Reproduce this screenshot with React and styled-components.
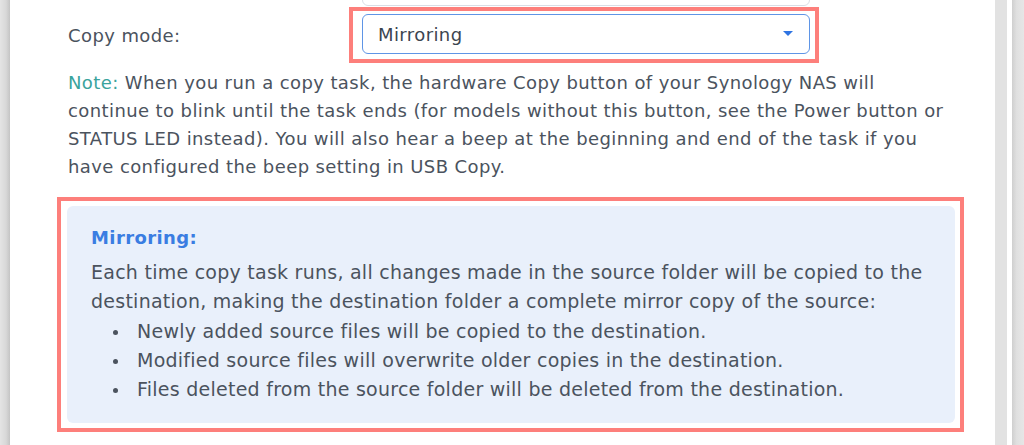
import React from "react";
import styled, { createGlobalStyle } from "styled-components";

const Global = createGlobalStyle`
  html, body { margin: 0; padding: 0; background: #ffffff; }
  body { font-family: "DejaVu Sans", Verdana, sans-serif; }
  * { box-sizing: border-box; }
`;

const Frame = styled.div`
  display: flex;
  width: 1024px;
  height: 445px;
  overflow: hidden;
  background: #ffffff;
`;

const LeftShade = styled.div`
  width: 10px;
  flex: none;
  background: linear-gradient(to right, #e4e4e4 0%, #d8d8d8 60%, #c4c4c4 100%);
`;

const Dialog = styled.div`
  flex: 1;
  padding-left: 58px;
  display: flex;
  flex-direction: column;
  color: #4b535e;
  font-size: 18px;
  line-height: 28px;
  letter-spacing: 0.4px;
`;

const RightEdge = styled.div`
  flex: none;
  display: flex;
  width: 29px;
`;

const Strip = styled.div`
  width: ${(p) => p.$w}px;
  background: ${(p) => p.$bg};
`;

const PrevRow = styled.div`
  height: 6px;
  overflow: hidden;
  display: flex;
  align-items: flex-end;
  padding-left: 294px;
`;

const PrevInput = styled.div`
  flex: none;
  width: 448px;
  height: 40px;
  border: 1px solid #d9dee5;
  border-radius: 6px;
`;

const FieldRow = styled.div`
  display: flex;
  align-items: center;
  margin-top: 1px;
`;

const Label = styled.div`
  width: 281px;
  flex: none;
  padding-top: 2px;
`;

const Highlight = styled.div`
  border: 4px solid #fd7f7b;
  padding: ${(p) => p.$pad};
  flex: none;
`;

const Select = styled.div`
  width: 448px;
  height: 40px;
  border: 1px solid #5f95e6;
  border-radius: 6px;
  display: flex;
  align-items: center;
  justify-content: space-between;
  padding: 1px 16px 0 15px;
  color: #3c4550;
`;

const Caret = styled.span`
  width: 0;
  height: 0;
  border-left: 5.5px solid transparent;
  border-right: 5.5px solid transparent;
  border-top: 5px solid #2f74e2;
  margin-top: -2px;
`;

const Note = styled.p`
  margin: 6px 0 0;
  width: 927px;
`;

const NoteTag = styled.span`
  color: #3aa39c;
`;

const InfoWrap = styled.div`
  margin-top: 16px;
  margin-left: -11px;
  width: 907px;
`;

const InfoBox = styled.div`
  background: #e9f0fb;
  border-radius: 6px;
  padding: 18px 20px 19px 24px;
`;

const Title = styled.div`
  color: #3a7de2;
  font-weight: bold;
  margin-bottom: 6px;
`;

const Body = styled.div`
  font-size: 19px;
  letter-spacing: 0.25px;
  line-height: 29px;
`;

const List = styled.ul`
  margin: 1px 0 0;
  padding-left: 22px;
  list-style: none;
`;

const Item = styled.li`
  display: flex;
  align-items: center;
  &::before {
    content: "";
    flex: none;
    width: 5px;
    height: 5px;
    border-radius: 50%;
    background: #4b535e;
    margin: 2px 19px 0 0;
  }
`;

export default function App() {
  return (
    <>
      <Global />
      <Frame>
        <LeftShade />
        <Dialog>
          <PrevRow>
            <PrevInput />
          </PrevRow>
          <FieldRow>
            <Label>Copy mode:</Label>
            <Highlight $pad="3px 5px 5px 9px">
              <Select>
                <span>Mirroring</span>
                <Caret />
              </Select>
            </Highlight>
          </FieldRow>
          <Note>
            <NoteTag>Note:</NoteTag> When you run a copy task, the hardware Copy
            button of your Synology NAS will
            <br />
            continue to blink until the task ends (for models without this button,
            see the Power button or
            <br />
            STATUS LED instead). You will also hear a beep at the beginning and end
            of the task if you
            <br />
            have configured the beep setting in USB Copy.
          </Note>
          <InfoWrap>
            <Highlight $pad="5px 5px 5px 6px">
              <InfoBox>
                <Title>Mirroring:</Title>
                <Body>
                  Each time copy task runs, all changes made in the source folder will
                  be copied to the destination, making the destination folder a
                  complete mirror copy of the source:
                  <List>
                    <Item>Newly added source files will be copied to the destination.</Item>
                    <Item>Modified source files will overwrite older copies in the destination.</Item>
                    <Item>Files deleted from the source folder will be deleted from the destination.</Item>
                  </List>
                </Body>
              </InfoBox>
            </Highlight>
          </InfoWrap>
        </Dialog>
        <RightEdge>
          <Strip $w={12} $bg="#e2e2e2" />
          <Strip $w={5} $bg="#ffffff" />
          <Strip $w={12} $bg="linear-gradient(to right, #cfcfcf, #e0e0e0 40%, #e6e6e6)" />
        </RightEdge>
      </Frame>
    </>
  );
}
